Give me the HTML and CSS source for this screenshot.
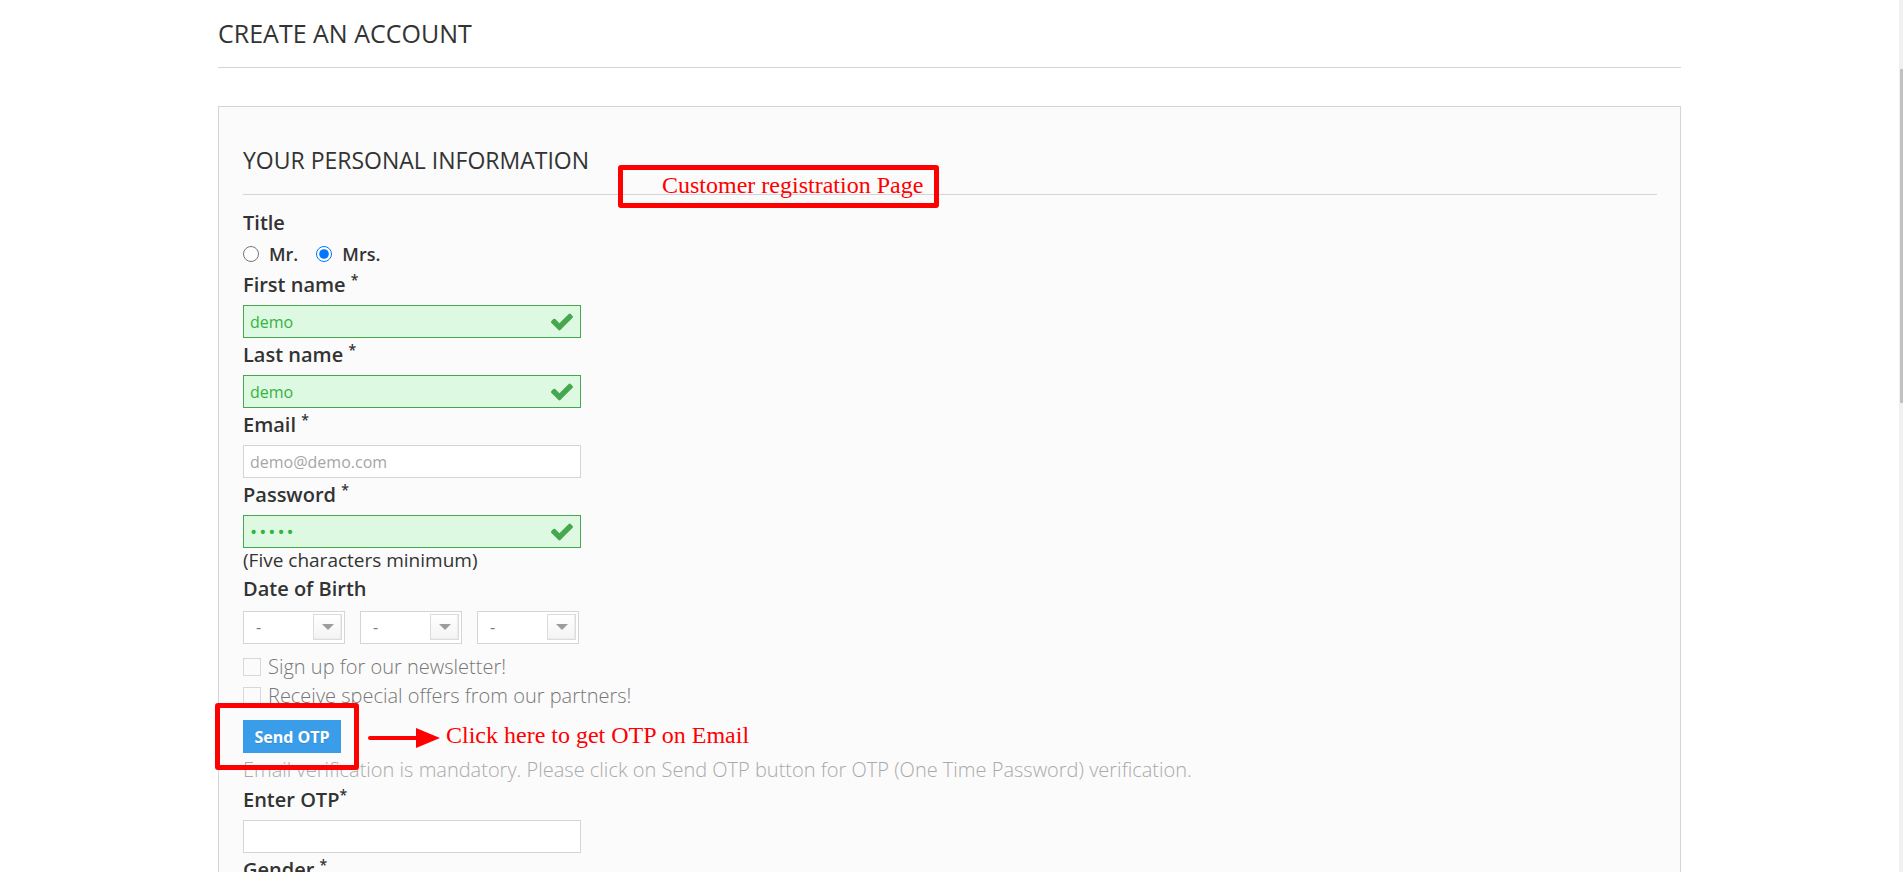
FILE: index.html
```html
<!DOCTYPE html>
<html lang="en">
<head>
  <meta charset="UTF-8">
  <meta name="viewport" content="width=device-width, initial-scale=1.0">
  <title>Create an account</title>
  <link rel="stylesheet" href="styles.css">
</head>
<body>
  <div class="page">
    <h1 class="page-heading">Create an account</h1>

    <form class="account-box">
      <h3 class="box-heading">Your personal information</h3>

      <div class="form-group title-group">
        <label>Title</label>
        <div class="radio-row">
          <label class="radio-opt"><input type="radio" name="id_gender">Mr.</label>
          <label class="radio-opt"><input type="radio" name="id_gender" checked>Mrs.</label>
        </div>
      </div>

      <div class="form-group">
        <label>First name <sup class="req">*</sup></label>
        <div class="input-wrap form-ok">
          <input class="form-control" type="text" value="demo">
          <svg class="ok-icon" viewBox="121 334 1550 1188"><path d="M1671 566q0 40-28 68l-724 724-136 136q-28 28-68 28t-68-28l-136-136-362-362q-28-28-28-68t28-68l136-136q28-28 68-28t68 28l294 295 656-657q28-28 68-28t68 28l136 136q28 28 28 68z"/></svg>
        </div>
      </div>

      <div class="form-group">
        <label>Last name <sup class="req">*</sup></label>
        <div class="input-wrap form-ok">
          <input class="form-control" type="text" value="demo">
          <svg class="ok-icon" viewBox="121 334 1550 1188"><path d="M1671 566q0 40-28 68l-724 724-136 136q-28 28-68 28t-68-28l-136-136-362-362q-28-28-28-68t28-68l136-136q28-28 68-28t68 28l294 295 656-657q28-28 68-28t68 28l136 136q28 28 28 68z"/></svg>
        </div>
      </div>

      <div class="form-group">
        <label>Email <sup class="req">*</sup></label>
        <div class="input-wrap">
          <input class="form-control" type="email" placeholder="demo@demo.com">
        </div>
      </div>

      <div class="form-group">
        <label>Password <sup class="req">*</sup></label>
        <div class="input-wrap form-ok">
          <input class="form-control pass" type="password" value="demo1">
          <svg class="ok-icon" viewBox="121 334 1550 1188"><path d="M1671 566q0 40-28 68l-724 724-136 136q-28 28-68 28t-68-28l-136-136-362-362q-28-28-28-68t28-68l136-136q28-28 68-28t68 28l294 295 656-657q28-28 68-28t68 28l136 136q28 28 28 68z"/></svg>
        </div>
        <p class="form-hint">(Five characters minimum)</p>
      </div>

      <div class="form-group">
        <label>Date of Birth</label>
        <div class="date-row">
          <div class="select-box"><span>-</span><span class="select-arrow"></span></div>
          <div class="select-box"><span>-</span><span class="select-arrow"></span></div>
          <div class="select-box"><span>-</span><span class="select-arrow"></span></div>
        </div>
      </div>

      <div class="checkboxes">
        <label class="check-row"><input class="check" type="checkbox">Sign up for our newsletter!</label>
        <label class="check-row"><input class="check" type="checkbox">Receive special offers from our partners!</label>
      </div>

      <button type="button" class="btn-otp">Send OTP</button>
      <p class="otp-note">Email verification is mandatory. Please click on Send OTP button for OTP (One Time Password) verification.</p>

      <div class="form-group">
        <label>Enter OTP<sup class="req">*</sup></label>
        <div class="input-wrap">
          <input class="form-control" type="text">
        </div>
      </div>

      <div class="form-group">
        <label>Gender <sup class="req">*</sup></label>
        <div class="radio-row">
          <label class="radio-opt"><input type="radio" name="sex">Male</label>
          <label class="radio-opt"><input type="radio" name="sex">Female</label>
        </div>
      </div>
    </form>

    <!-- annotations drawn over the screenshot -->
    <div class="note-box">Customer registration Page</div>
    <div class="note-frame"></div>
    <div class="note-arrow">
      <svg width="72" height="20" viewBox="0 0 72 20"><line x1="2" y1="10" x2="50" y2="10" stroke="#ff0000" stroke-width="4" stroke-linecap="round"/><polygon points="48,0 72,10 48,20" fill="#ff0000"/></svg>
      <span>Click here to get OTP on Email</span>
    </div>
  </div>

  <div class="scrollbar"><div class="scroll-thumb"></div></div>
</body>
</html>
```

FILE: styles.css
```css
html, body {
  overflow: hidden;
}
body {
  margin: 0;
  font-family: "Open Sans", Arial, sans-serif;
  color: #333;
  background-color: #fff;
}
.page {
  position: relative;
  margin-left: 218px;
  width: 1463px;
  padding-top: 18px;
}
.page-heading {
  margin: 0 0 38px;
  padding-bottom: 19px;
  border-bottom: 1px solid #d6d4d4;
  font-size: 25px;
  line-height: 30px;
  font-weight: 500;
  text-transform: uppercase;
}
.account-box {
  background-color: #fbfbfb;
  border: 1px solid #d6d4d4;
  padding: 39px 23px 20px 24px;
}
.box-heading {
  margin: 0 0 15px;
  padding-bottom: 20px;
  border-bottom: 1px solid #d6d4d4;
  font-size: 23px;
  line-height: 28px;
  font-weight: 500;
  text-transform: uppercase;
}
.form-group {
  margin-bottom: 4px;
}
.form-group > label {
  display: block;
  font-size: 20px;
  line-height: 26px;
  font-weight: 600;
}
.req {
  font-size: 14px;
  line-height: 0;
  vertical-align: 7px;
}
.radio-row {
  display: flex;
  align-items: center;
  gap: 18px;
  height: 24px;
  margin: 6px 0 6px;
}
.radio-opt {
  display: flex;
  align-items: center;
  gap: 10px;
  font-size: 18px;
  font-weight: 600;
  line-height: 24px;
}
.radio-opt input {
  width: 16px;
  height: 16px;
  margin: 0;
}
.input-wrap {
  position: relative;
  width: 338px;
  margin-top: 7px;
}
.form-control {
  display: block;
  box-sizing: border-box;
  width: 100%;
  height: 33px;
  padding: 0 6px;
  border: 1px solid #d6d4d4;
  background-color: #fff;
  font-family: "Open Sans", Arial, sans-serif;
  font-size: 16px;
  color: #9c9b9b;
  outline: none;
}
.form-control::placeholder {
  color: #a6a6a6;
}
.form-ok .form-control {
  background-color: #ddf9e1;
  border-color: #46a74e;
  color: #35b33f;
}
.form-control.pass {
  font-size: 19px;
  letter-spacing: 2px;
}
.ok-icon {
  position: absolute;
  right: 8px;
  top: 8px;
  width: 22px;
  height: 18px;
  fill: #46a74e;
}
.form-hint {
  margin: 0;
  font-size: 19px;
  line-height: 24px;
}
.date-row {
  display: flex;
  gap: 15px;
  margin-top: 9px;
}
.select-box {
  box-sizing: border-box;
  display: flex;
  justify-content: space-between;
  align-items: center;
  width: 102px;
  height: 33px;
  padding: 2px 2px 3px 12px;
  border: 1px solid #d6d4d4;
  background-color: #fff;
  font-size: 16px;
  color: #777;
}
.select-arrow {
  box-sizing: border-box;
  display: flex;
  align-items: center;
  justify-content: center;
  width: 29px;
  height: 100%;
  border: 1px solid #dcdcdc;
  background: linear-gradient(#fff, #f4f4f4);
  box-shadow: inset -1px -1px 0 #ececec;
}
.select-arrow::after {
  content: "";
  border-left: 6px solid transparent;
  border-right: 6px solid transparent;
  border-top: 6px solid #9c9c9c;
}
.checkboxes {
  margin-top: 8px;
}
.check-row {
  display: flex;
  align-items: center;
  gap: 7px;
  height: 29px;
  font-size: 20px;
  font-weight: 300;
  color: #777;
}
.check {
  appearance: none;
  width: 18px;
  height: 18px;
  margin: 0;
  border: 1px solid #d8d8d8;
  background-color: #fbfbfb;
}
.btn-otp {
  display: block;
  width: 98px;
  height: 33px;
  margin-top: 10px;
  padding: 0;
  border: none;
  background-color: #3a9de9;
  color: #fff;
  font-family: "Open Sans", Arial, sans-serif;
  font-size: 16px;
  font-weight: 700;
  text-shadow: 0 1px 0 rgba(0, 0, 0, 0.15);
  cursor: pointer;
}
.otp-note {
  margin: 5px 0 5px;
  font-size: 20px;
  line-height: 24px;
  font-weight: 300;
  color: #aaa;
}
.note-box {
  position: absolute;
  left: 400px;
  top: 165px;
  box-sizing: border-box;
  width: 321px;
  height: 43px;
  padding: 3px 0 0 39px;
  border: 5px solid #ff0000;
  border-radius: 3px;
  font-family: "Liberation Serif", "Times New Roman", serif;
  font-size: 24px;
  line-height: 24px;
  color: #ff0000;
}
.note-frame {
  position: absolute;
  left: -3px;
  top: 703px;
  box-sizing: border-box;
  width: 144px;
  height: 67px;
  border: 5px solid #ff0000;
  border-radius: 3px;
}
.note-arrow {
  position: absolute;
  left: 150px;
  top: 723px;
  display: flex;
  align-items: flex-start;
  gap: 6px;
  font-family: "Liberation Serif", "Times New Roman", serif;
  font-size: 24px;
  line-height: 24px;
  color: #ff0000;
  white-space: nowrap;
}
.note-arrow svg {
  margin-top: 5px;
}
.scrollbar {
  position: fixed;
  top: 0;
  right: 0;
  width: 4px;
  height: 100%;
  background-color: #f1f1f1;
}
.scroll-thumb {
  margin: 69px 0 0 1px;
  width: 3px;
  height: 334px;
  background-color: #c1c1c1;
}
```
